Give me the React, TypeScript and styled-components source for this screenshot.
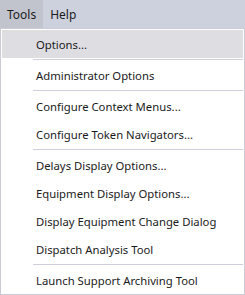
import React from 'react';
import styled, {createGlobalStyle} from 'styled-components';

const GlobalStyle = createGlobalStyle`
    html, body {
        margin: 0;
        padding: 0;
        background: #ffffff;
    }
    body {
        width: 245px;
        height: 295px;
        overflow: hidden;
        font-family: "Noto Sans", "Open Sans", sans-serif;
        font-size: 11.3px;
        color: #1b1b1b;
    }
`;

const MenuBar = styled.div`
    display: flex;
    height: 28px;
    background-color: #cdd1dd;
`;

const BarItem = styled.div<{$open?: boolean}>`
    display: flex;
    align-items: center;
    padding: 0 7px;
    font-size: 12px;
    background-color: ${({$open}) => ($open ? '#c2c4cd' : 'transparent')};
`;

const Dropdown = styled.div`
    display: flex;
    flex-direction: column;
    width: 245px;
    height: 267px;
    box-sizing: border-box;
    padding: 1px;
    border: 1px solid #c9cbd6;
    background-color: #ffffff;
`;

const Item = styled.div<{$active?: boolean}>`
    display: flex;
    align-items: center;
    height: 28px;
    flex-shrink: 0;
    padding-left: 34px;
    background-color: ${({$active}) => ($active ? '#dedde2' : 'transparent')};
`;

const Separator = styled.div`
    height: 3px;
    flex-shrink: 0;
    display: flex;
    align-items: center;
    padding-left: 31px;

    &::after {
        content: '';
        flex: 1;
        height: 1px;
        background-color: #d0cfdd;
    }
`;

type Entry = {label: string} | 'sep';

const entries: Entry[] = [
    {label: 'Options...'},
    'sep',
    {label: 'Administrator Options'},
    'sep',
    {label: 'Configure Context Menus...'},
    {label: 'Configure Token Navigators...'},
    'sep',
    {label: 'Delays Display Options...'},
    {label: 'Equipment Display Options...'},
    {label: 'Display Equipment Change Dialog'},
    {label: 'Dispatch Analysis Tool'},
    'sep',
    {label: 'Launch Support Archiving Tool'},
];

function App() {
    return (
        <>
            <GlobalStyle/>
            <MenuBar>
                <BarItem $open>Tools</BarItem>
                <BarItem>Help</BarItem>
            </MenuBar>
            <Dropdown>
                {entries.map((entry, i) =>
                    entry === 'sep' ? (
                        <Separator key={i}/>
                    ) : (
                        <Item key={i} $active={i === 0}>{entry.label}</Item>
                    )
                )}
            </Dropdown>
        </>
    );
}

export default App;
